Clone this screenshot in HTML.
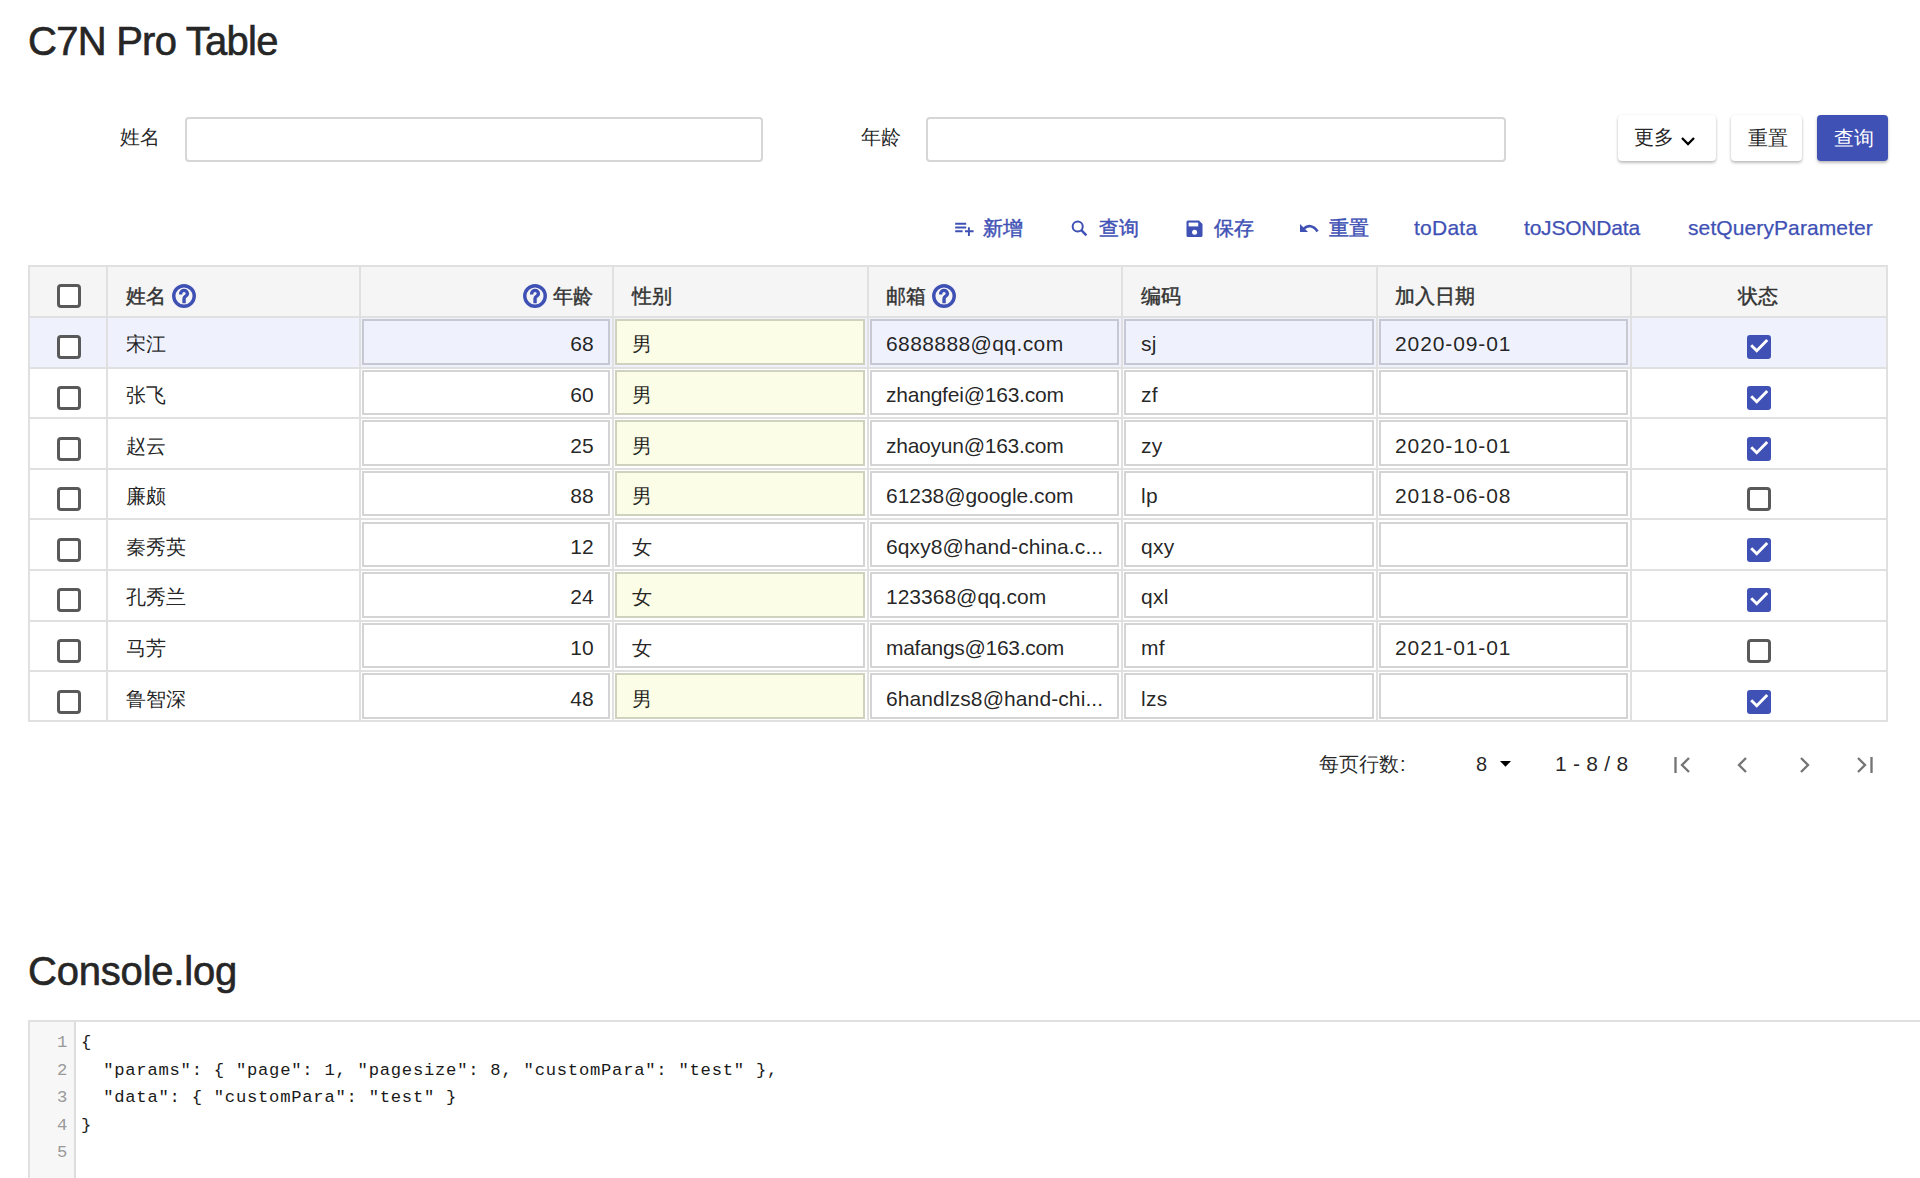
<!DOCTYPE html>
<html><head><meta charset="utf-8"><style>
html,body{margin:0;padding:0}
body{width:1920px;height:1178px;overflow:hidden;background:#fff;position:relative;font-family:"Liberation Sans",sans-serif;color:rgba(0,0,0,.87)}
.a{position:absolute;white-space:nowrap}
.t{position:absolute;white-space:nowrap;font-size:20px;line-height:20px;height:20px}
.h1{position:absolute;white-space:nowrap;font-size:40px;line-height:40px;color:#262626;-webkit-text-stroke:.6px #262626}
.inp{position:absolute;box-sizing:border-box;border:2px solid #d6d6d6;border-radius:4px;background:#fff}
.btn{position:absolute;box-sizing:border-box;border-radius:4px;background:#fff;box-shadow:0 2px 3px rgba(0,0,0,.25),0 0 2px rgba(0,0,0,.08)}
.tb{color:#3f51b5;-webkit-text-stroke:.45px #3f51b5}
.hl{position:absolute;background:#e0e0e0}
.ed{position:absolute;box-sizing:border-box;border:2px solid rgba(0,0,0,.17)}
.lat{font-size:21px;letter-spacing:.25px}
.hd{color:#333;-webkit-text-stroke:.45px #333}
.mono{position:absolute;white-space:pre;font-family:"Liberation Mono",monospace;font-size:17.2px;letter-spacing:.75px;line-height:27.5px;color:#1a1a1a}
</style></head><body>

<div class="h1" style="left:28px;top:21px;letter-spacing:-0.75px">C7N Pro Table</div>
<div class="t" style="left:120px;top:127px">姓名</div>
<div class="inp" style="left:185px;top:117px;width:578px;height:45px"></div>
<div class="t" style="left:861px;top:127px">年龄</div>
<div class="inp" style="left:926px;top:117px;width:580px;height:45px"></div>
<div class="btn" style="left:1618px;top:115px;width:98px;height:46px"></div>
<div class="t" style="left:1634px;top:127px">更多</div>
<svg class="a" style="left:1679.5px;top:134.6px" width="16" height="12" viewBox="0 0 16 12"><path d="M2 3l6 6 6-6" fill="none" stroke="#000" stroke-width="2.35"/></svg>
<div class="btn" style="left:1731px;top:115px;width:71px;height:46px"></div>
<div class="t" style="left:1748px;top:128px">重置</div>
<div class="btn" style="left:1817px;top:115px;width:71px;height:46px;background:#3f51b5"></div>
<div class="t" style="left:1834px;top:128px;color:#fff">查询</div>
<svg class="a" style="left:948px;top:212px" width="30" height="30" viewBox="0 0 30 30"><path d="M7.2 11.7H18.2M7.2 15.5H18.2M7.2 19.3H14.6M20.9 15.2V23.9M17 19.3H25.6" stroke="#3f51b5" stroke-width="1.9"/></svg>
<div class="t tb" style="left:983px;top:218px">新增</div>
<svg class="a" style="left:1068px;top:216px" width="22" height="22" viewBox="0 0 22 22"><circle cx="9.7" cy="10.45" r="5.05" fill="none" stroke="#3f51b5" stroke-width="2"/><path d="M13.3 14.1L18.4 19.3" stroke="#3f51b5" stroke-width="2.4"/></svg>
<div class="t tb" style="left:1099px;top:218px">查询</div>
<svg class="a" style="left:1185px;top:220px" width="19" height="18" viewBox="0 0 19 18"><path d="M1.5 2a1.5 1.5 0 0 1 1.5-1.5h11l3.5 3.5v11.5a1.5 1.5 0 0 1-1.5 1.5h-13a1.5 1.5 0 0 1-1.5-1.5z" fill="#3f51b5"/><rect x="3.6" y="2.6" width="9.6" height="3.8" fill="#fff"/><circle cx="9.6" cy="12.3" r="2.5" fill="#fff"/></svg>
<div class="t tb" style="left:1214px;top:218px">保存</div>
<svg class="a" style="left:1299px;top:221px" width="21" height="15" viewBox="0 0 21 15"><path d="M5 7.5c3.5-3.5 9.5-3.5 13.5 3" fill="none" stroke="#3f51b5" stroke-width="2.6"/><path d="M1 3v8h8z" fill="#3f51b5"/></svg>
<div class="t tb" style="left:1329px;top:218px">重置</div>
<div class="t tb lat" style="left:1414px;top:218px;-webkit-text-stroke:.25px #3f51b5">toData</div>
<div class="t tb lat" style="left:1524px;top:218px;letter-spacing:-0.2px;-webkit-text-stroke:.25px #3f51b5">toJSONData</div>
<div class="t tb lat" style="left:1688px;top:218px;letter-spacing:.1px;-webkit-text-stroke:.25px #3f51b5">setQueryParameter</div>
<div class="a" style="left:28px;top:265px;width:1860px;height:457px;box-sizing:border-box;border:2px solid #e0e0e0"></div>
<div class="a" style="left:30px;top:267px;width:1856px;height:49px;background:#f5f5f5"></div>
<div class="a" style="left:30px;top:318px;width:1856px;height:49px;background:#eff2fd"></div>
<div class="hl" style="left:30px;top:316px;width:1856px;height:2px"></div>
<div class="hl" style="left:30px;top:367px;width:1856px;height:2px"></div>
<div class="hl" style="left:30px;top:417px;width:1856px;height:2px"></div>
<div class="hl" style="left:30px;top:468px;width:1856px;height:2px"></div>
<div class="hl" style="left:30px;top:518px;width:1856px;height:2px"></div>
<div class="hl" style="left:30px;top:569px;width:1856px;height:2px"></div>
<div class="hl" style="left:30px;top:620px;width:1856px;height:2px"></div>
<div class="hl" style="left:30px;top:670px;width:1856px;height:2px"></div>
<div class="hl" style="left:106px;top:267px;width:1.5px;height:453px"></div>
<div class="hl" style="left:359px;top:267px;width:1.5px;height:453px"></div>
<div class="hl" style="left:612px;top:267px;width:1.5px;height:453px"></div>
<div class="hl" style="left:867px;top:267px;width:1.5px;height:453px"></div>
<div class="hl" style="left:1121px;top:267px;width:1.5px;height:453px"></div>
<div class="hl" style="left:1376px;top:267px;width:1.5px;height:453px"></div>
<div class="hl" style="left:1630px;top:267px;width:1.5px;height:453px"></div>
<svg class="a" style="left:57px;top:284px" width="24" height="24" viewBox="0 0 24 24"><rect x="1.5" y="1.5" width="21" height="21" rx="2.5" fill="#fff" stroke="#595959" stroke-width="3"/></svg>
<div class="t hd" style="left:126px;top:286px">姓名</div>
<svg class="a" style="left:172px;top:284px" width="24" height="24" viewBox="0 0 24 24"><circle cx="12" cy="12" r="10.25" fill="none" stroke="#3f51b5" stroke-width="3.4"/><path d="M8.65 10.6V9.8a3.4 3.4 0 0 1 6.8 0c0 2.3-3.4 2.3-3.4 4.6V19.3" fill="none" stroke="#3f51b5" stroke-width="3.4"/></svg>
<svg class="a" style="left:523px;top:284px" width="24" height="24" viewBox="0 0 24 24"><circle cx="12" cy="12" r="10.25" fill="none" stroke="#3f51b5" stroke-width="3.4"/><path d="M8.65 10.6V9.8a3.4 3.4 0 0 1 6.8 0c0 2.3-3.4 2.3-3.4 4.6V19.3" fill="none" stroke="#3f51b5" stroke-width="3.4"/></svg>
<div class="t hd" style="left:553px;top:286px">年龄</div>
<div class="t hd" style="left:632px;top:286px">性别</div>
<div class="t hd" style="left:886px;top:286px">邮箱</div>
<svg class="a" style="left:932px;top:284px" width="24" height="24" viewBox="0 0 24 24"><circle cx="12" cy="12" r="10.25" fill="none" stroke="#3f51b5" stroke-width="3.4"/><path d="M8.65 10.6V9.8a3.4 3.4 0 0 1 6.8 0c0 2.3-3.4 2.3-3.4 4.6V19.3" fill="none" stroke="#3f51b5" stroke-width="3.4"/></svg>
<div class="t hd" style="left:1141px;top:286px">编码</div>
<div class="t hd" style="left:1395px;top:286px">加入日期</div>
<div class="t hd" style="left:1738px;top:286px">状态</div>
<svg class="a" style="left:57px;top:335px" width="24" height="24" viewBox="0 0 24 24"><rect x="1.5" y="1.5" width="21" height="21" rx="2.5" fill="#fff" stroke="#595959" stroke-width="3"/></svg>
<div class="t" style="left:126px;top:334px">宋江</div>
<div class="ed" style="left:362px;top:319px;width:248px;height:46px;"></div>
<div class="ed" style="left:615px;top:319px;width:250px;height:46px;background:#fbfde7;"></div>
<div class="ed" style="left:870px;top:319px;width:249px;height:46px;"></div>
<div class="ed" style="left:1124px;top:319px;width:250px;height:46px;"></div>
<div class="ed" style="left:1379px;top:319px;width:249px;height:46px;"></div>
<div class="t lat" style="right:1326px;top:334px">68</div>
<div class="t" style="left:632px;top:334px">男</div>
<div class="t lat" style="left:886px;top:334px;letter-spacing:0.4px">6888888@qq.com</div>
<div class="t lat" style="left:1141px;top:334px">sj</div>
<div class="t lat" style="left:1395px;top:334px;letter-spacing:.9px">2020-09-01</div>
<svg class="a" style="left:1747px;top:335px" width="24" height="24" viewBox="0 0 24 24"><rect x="0" y="0" width="24" height="24" rx="3" fill="#3f51b5"/><path d="M4.2 10.3L9.75 15.8L20.25 5.1" fill="none" stroke="#fff" stroke-width="2.9"/></svg>
<svg class="a" style="left:57px;top:386px" width="24" height="24" viewBox="0 0 24 24"><rect x="1.5" y="1.5" width="21" height="21" rx="2.5" fill="#fff" stroke="#595959" stroke-width="3"/></svg>
<div class="t" style="left:126px;top:385px">张飞</div>
<div class="ed" style="left:362px;top:370px;width:248px;height:45px;"></div>
<div class="ed" style="left:615px;top:370px;width:250px;height:45px;background:#fbfde7;"></div>
<div class="ed" style="left:870px;top:370px;width:249px;height:45px;"></div>
<div class="ed" style="left:1124px;top:370px;width:250px;height:45px;"></div>
<div class="ed" style="left:1379px;top:370px;width:249px;height:45px;"></div>
<div class="t lat" style="right:1326px;top:385px">60</div>
<div class="t" style="left:632px;top:385px">男</div>
<div class="t lat" style="left:886px;top:385px;letter-spacing:-0.22px">zhangfei@163.com</div>
<div class="t lat" style="left:1141px;top:385px">zf</div>
<div class="t lat" style="left:1395px;top:385px;letter-spacing:.9px"></div>
<svg class="a" style="left:1747px;top:386px" width="24" height="24" viewBox="0 0 24 24"><rect x="0" y="0" width="24" height="24" rx="3" fill="#3f51b5"/><path d="M4.2 10.3L9.75 15.8L20.25 5.1" fill="none" stroke="#fff" stroke-width="2.9"/></svg>
<svg class="a" style="left:57px;top:437px" width="24" height="24" viewBox="0 0 24 24"><rect x="1.5" y="1.5" width="21" height="21" rx="2.5" fill="#fff" stroke="#595959" stroke-width="3"/></svg>
<div class="t" style="left:126px;top:436px">赵云</div>
<div class="ed" style="left:362px;top:420px;width:248px;height:46px;"></div>
<div class="ed" style="left:615px;top:420px;width:250px;height:46px;background:#fbfde7;"></div>
<div class="ed" style="left:870px;top:420px;width:249px;height:46px;"></div>
<div class="ed" style="left:1124px;top:420px;width:250px;height:46px;"></div>
<div class="ed" style="left:1379px;top:420px;width:249px;height:46px;"></div>
<div class="t lat" style="right:1326px;top:436px">25</div>
<div class="t" style="left:632px;top:436px">男</div>
<div class="t lat" style="left:886px;top:436px;letter-spacing:-0.25px">zhaoyun@163.com</div>
<div class="t lat" style="left:1141px;top:436px">zy</div>
<div class="t lat" style="left:1395px;top:436px;letter-spacing:.9px">2020-10-01</div>
<svg class="a" style="left:1747px;top:437px" width="24" height="24" viewBox="0 0 24 24"><rect x="0" y="0" width="24" height="24" rx="3" fill="#3f51b5"/><path d="M4.2 10.3L9.75 15.8L20.25 5.1" fill="none" stroke="#fff" stroke-width="2.9"/></svg>
<svg class="a" style="left:57px;top:487px" width="24" height="24" viewBox="0 0 24 24"><rect x="1.5" y="1.5" width="21" height="21" rx="2.5" fill="#fff" stroke="#595959" stroke-width="3"/></svg>
<div class="t" style="left:126px;top:486px">廉颇</div>
<div class="ed" style="left:362px;top:471px;width:248px;height:45px;"></div>
<div class="ed" style="left:615px;top:471px;width:250px;height:45px;background:#fbfde7;"></div>
<div class="ed" style="left:870px;top:471px;width:249px;height:45px;"></div>
<div class="ed" style="left:1124px;top:471px;width:250px;height:45px;"></div>
<div class="ed" style="left:1379px;top:471px;width:249px;height:45px;"></div>
<div class="t lat" style="right:1326px;top:486px">88</div>
<div class="t" style="left:632px;top:486px">男</div>
<div class="t lat" style="left:886px;top:486px;letter-spacing:-0.05px">61238@google.com</div>
<div class="t lat" style="left:1141px;top:486px">lp</div>
<div class="t lat" style="left:1395px;top:486px;letter-spacing:.9px">2018-06-08</div>
<svg class="a" style="left:1747px;top:487px" width="24" height="24" viewBox="0 0 24 24"><rect x="1.5" y="1.5" width="21" height="21" rx="2.5" fill="#fff" stroke="#595959" stroke-width="3"/></svg>
<svg class="a" style="left:57px;top:538px" width="24" height="24" viewBox="0 0 24 24"><rect x="1.5" y="1.5" width="21" height="21" rx="2.5" fill="#fff" stroke="#595959" stroke-width="3"/></svg>
<div class="t" style="left:126px;top:537px">秦秀英</div>
<div class="ed" style="left:362px;top:522px;width:248px;height:45px;"></div>
<div class="ed" style="left:615px;top:522px;width:250px;height:45px;"></div>
<div class="ed" style="left:870px;top:522px;width:249px;height:45px;"></div>
<div class="ed" style="left:1124px;top:522px;width:250px;height:45px;"></div>
<div class="ed" style="left:1379px;top:522px;width:249px;height:45px;"></div>
<div class="t lat" style="right:1326px;top:537px">12</div>
<div class="t" style="left:632px;top:537px">女</div>
<div class="t lat" style="left:886px;top:537px;letter-spacing:0.1px">6qxy8@hand-china.c...</div>
<div class="t lat" style="left:1141px;top:537px">qxy</div>
<div class="t lat" style="left:1395px;top:537px;letter-spacing:.9px"></div>
<svg class="a" style="left:1747px;top:538px" width="24" height="24" viewBox="0 0 24 24"><rect x="0" y="0" width="24" height="24" rx="3" fill="#3f51b5"/><path d="M4.2 10.3L9.75 15.8L20.25 5.1" fill="none" stroke="#fff" stroke-width="2.9"/></svg>
<svg class="a" style="left:57px;top:588px" width="24" height="24" viewBox="0 0 24 24"><rect x="1.5" y="1.5" width="21" height="21" rx="2.5" fill="#fff" stroke="#595959" stroke-width="3"/></svg>
<div class="t" style="left:126px;top:587px">孔秀兰</div>
<div class="ed" style="left:362px;top:572px;width:248px;height:46px;"></div>
<div class="ed" style="left:615px;top:572px;width:250px;height:46px;background:#fbfde7;"></div>
<div class="ed" style="left:870px;top:572px;width:249px;height:46px;"></div>
<div class="ed" style="left:1124px;top:572px;width:250px;height:46px;"></div>
<div class="ed" style="left:1379px;top:572px;width:249px;height:46px;"></div>
<div class="t lat" style="right:1326px;top:587px">24</div>
<div class="t" style="left:632px;top:587px">女</div>
<div class="t lat" style="left:886px;top:587px;letter-spacing:0px">123368@qq.com</div>
<div class="t lat" style="left:1141px;top:587px">qxl</div>
<div class="t lat" style="left:1395px;top:587px;letter-spacing:.9px"></div>
<svg class="a" style="left:1747px;top:588px" width="24" height="24" viewBox="0 0 24 24"><rect x="0" y="0" width="24" height="24" rx="3" fill="#3f51b5"/><path d="M4.2 10.3L9.75 15.8L20.25 5.1" fill="none" stroke="#fff" stroke-width="2.9"/></svg>
<svg class="a" style="left:57px;top:639px" width="24" height="24" viewBox="0 0 24 24"><rect x="1.5" y="1.5" width="21" height="21" rx="2.5" fill="#fff" stroke="#595959" stroke-width="3"/></svg>
<div class="t" style="left:126px;top:638px">马芳</div>
<div class="ed" style="left:362px;top:623px;width:248px;height:45px;"></div>
<div class="ed" style="left:615px;top:623px;width:250px;height:45px;"></div>
<div class="ed" style="left:870px;top:623px;width:249px;height:45px;"></div>
<div class="ed" style="left:1124px;top:623px;width:250px;height:45px;"></div>
<div class="ed" style="left:1379px;top:623px;width:249px;height:45px;"></div>
<div class="t lat" style="right:1326px;top:638px">10</div>
<div class="t" style="left:632px;top:638px">女</div>
<div class="t lat" style="left:886px;top:638px;letter-spacing:-0.29px">mafangs@163.com</div>
<div class="t lat" style="left:1141px;top:638px">mf</div>
<div class="t lat" style="left:1395px;top:638px;letter-spacing:.9px">2021-01-01</div>
<svg class="a" style="left:1747px;top:639px" width="24" height="24" viewBox="0 0 24 24"><rect x="1.5" y="1.5" width="21" height="21" rx="2.5" fill="#fff" stroke="#595959" stroke-width="3"/></svg>
<svg class="a" style="left:57px;top:690px" width="24" height="24" viewBox="0 0 24 24"><rect x="1.5" y="1.5" width="21" height="21" rx="2.5" fill="#fff" stroke="#595959" stroke-width="3"/></svg>
<div class="t" style="left:126px;top:689px">鲁智深</div>
<div class="ed" style="left:362px;top:673px;width:248px;height:46px;"></div>
<div class="ed" style="left:615px;top:673px;width:250px;height:46px;background:#fbfde7;"></div>
<div class="ed" style="left:870px;top:673px;width:249px;height:46px;"></div>
<div class="ed" style="left:1124px;top:673px;width:250px;height:46px;"></div>
<div class="ed" style="left:1379px;top:673px;width:249px;height:46px;"></div>
<div class="t lat" style="right:1326px;top:689px">48</div>
<div class="t" style="left:632px;top:689px">男</div>
<div class="t lat" style="left:886px;top:689px;letter-spacing:0.1px">6handlzs8@hand-chi...</div>
<div class="t lat" style="left:1141px;top:689px">lzs</div>
<div class="t lat" style="left:1395px;top:689px;letter-spacing:.9px"></div>
<svg class="a" style="left:1747px;top:690px" width="24" height="24" viewBox="0 0 24 24"><rect x="0" y="0" width="24" height="24" rx="3" fill="#3f51b5"/><path d="M4.2 10.3L9.75 15.8L20.25 5.1" fill="none" stroke="#fff" stroke-width="2.9"/></svg>
<div class="t" style="left:1319px;top:754px;color:rgba(0,0,0,.85)">每页行数<span style="margin-left:1px">:</span></div>
<div class="t" style="left:1476px;top:754px">8</div>
<svg class="a" style="left:1500px;top:760.5px" width="11" height="6" viewBox="0 0 11 6"><path d="M0 0h11l-5.5 5.8z" fill="#000"/></svg>
<div class="t lat" style="left:1555px;top:754px">1 - 8 / 8</div>
<svg class="a" style="left:1670.6px;top:754px" width="24" height="22" viewBox="0 0 24 22"><path d="M4.5 3v16" stroke="#757575" stroke-width="2.35"/><path d="M18 4l-7 7 7 7" fill="none" stroke="#757575" stroke-width="2.35"/></svg>
<svg class="a" style="left:1732.3px;top:754px" width="20" height="22" viewBox="0 0 20 22"><path d="M14 4l-7 7 7 7" fill="none" stroke="#757575" stroke-width="2.35"/></svg>
<svg class="a" style="left:1794.5px;top:754px" width="20" height="22" viewBox="0 0 20 22"><path d="M6 4l7 7-7 7" fill="none" stroke="#757575" stroke-width="2.35"/></svg>
<svg class="a" style="left:1852.4px;top:754px" width="24" height="22" viewBox="0 0 24 22"><path d="M19.5 3v16" stroke="#757575" stroke-width="2.35"/><path d="M6 4l7 7-7 7" fill="none" stroke="#757575" stroke-width="2.35"/></svg>
<div class="h1" style="left:28px;top:951px;letter-spacing:-0.2px">Console.log</div>
<div class="a" style="left:28px;top:1020px;width:1900px;height:200px;box-sizing:border-box;border:2px solid #e0e0e0;border-right:none"></div>
<div class="a" style="left:30px;top:1022px;width:44px;height:200px;background:#f7f7f7;border-right:2px solid #ddd"></div>
<div class="mono" style="left:30px;width:38px;text-align:right;top:1029.0px;color:#999">1</div>
<div class="mono" style="left:81px;top:1029.0px">{</div>
<div class="mono" style="left:30px;width:38px;text-align:right;top:1056.5px;color:#999">2</div>
<div class="mono" style="left:81px;top:1056.5px">  "params": { "page": 1, "pagesize": 8, "customPara": "test" },</div>
<div class="mono" style="left:30px;width:38px;text-align:right;top:1084.0px;color:#999">3</div>
<div class="mono" style="left:81px;top:1084.0px">  "data": { "customPara": "test" }</div>
<div class="mono" style="left:30px;width:38px;text-align:right;top:1111.5px;color:#999">4</div>
<div class="mono" style="left:81px;top:1111.5px">}</div>
<div class="mono" style="left:30px;width:38px;text-align:right;top:1139.0px;color:#999">5</div>
<div class="mono" style="left:81px;top:1139.0px"></div>
</body></html>
